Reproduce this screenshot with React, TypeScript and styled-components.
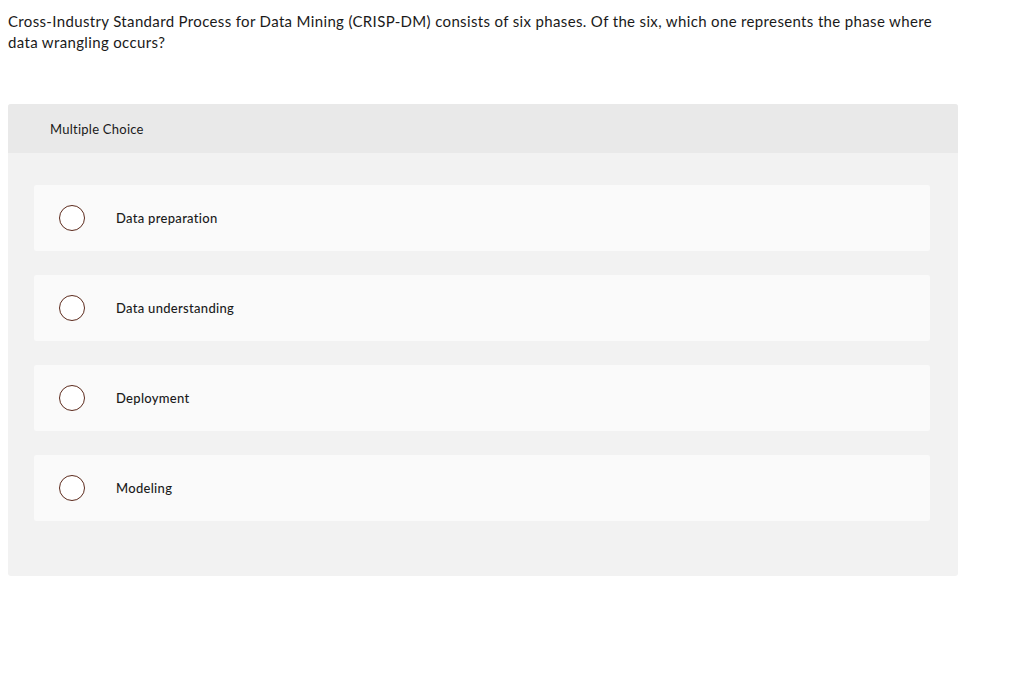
import styled, { createGlobalStyle } from 'styled-components'

const GlobalStyle = createGlobalStyle`
  body {
    margin: 8px;
    background: #ffffff;
    font-family: Lato, "Open Sans", sans-serif;
    color: #1a1a1a;
  }
`

const options = ['Data preparation', 'Data understanding', 'Deployment', 'Modeling']

export default function App() {
  return (
    <>
      <GlobalStyle />
      <Question>
        Cross-Industry Standard Process for Data Mining (CRISP-DM) consists of
        six phases. Of the six, which one represents the phase where data
        wrangling occurs?
      </Question>
      <Card>
        <CardHeader>Multiple Choice</CardHeader>
        <CardBody>
          {options.map((label) => (
            <Option key={label}>
              <Radio />
              <OptionLabel>{label}</OptionLabel>
            </Option>
          ))}
        </CardBody>
      </Card>
    </>
  )
}

const Question = styled.p`
  margin: 3px 0 0;
  width: 945px;
  font-size: 15px;
  line-height: 21px;
  letter-spacing: 0.35px;
  color: #1a1a1a;
`

const Card = styled.div`
  margin-top: 51px;
  width: 950px;
  border-radius: 3px;
  overflow: hidden;
  background: #f2f2f2;
`

const CardHeader = styled.div`
  height: 49px;
  display: flex;
  align-items: center;
  padding-left: 42px;
  background: #e9e9e9;
  font-size: 13px;
  letter-spacing: 0.25px;
  color: #1a1a1a;
`

const CardBody = styled.div`
  display: flex;
  flex-direction: column;
  gap: 24px;
  padding: 32px 28px 55px 26px;
`

const Option = styled.div`
  height: 66px;
  display: flex;
  align-items: center;
  padding-left: 25px;
  background: #fafafa;
  border-radius: 2px;
`

const Radio = styled.span`
  box-sizing: border-box;
  width: 26px;
  height: 26px;
  border-radius: 50%;
  border: 1.5px solid #5c2a1c;
  background: #ffffff;
  flex-shrink: 0;
`

const OptionLabel = styled.span`
  margin-left: 31px;
  font-size: 13px;
  font-weight: 500;
  letter-spacing: 0.3px;
  color: #1a1a1a;
`
